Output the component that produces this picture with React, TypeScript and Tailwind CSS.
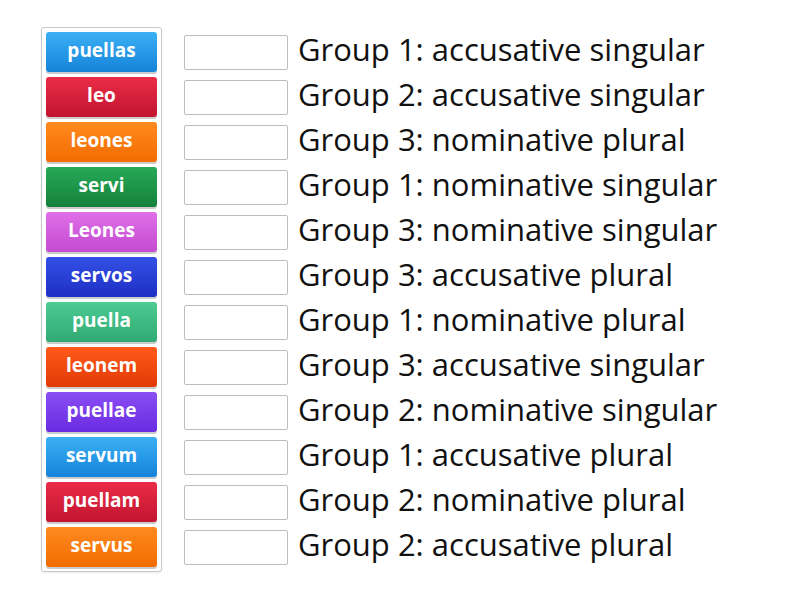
const rows = [
  { word: 'puellas', from: '#3bb0f5', to: '#1583d9', label: 'Group 1: accusative singular' },
  { word: 'leo', from: '#ea2c48', to: '#c2142f', label: 'Group 2: accusative singular' },
  { word: 'leones', from: '#ff8a1f', to: '#f26c00', label: 'Group 3: nominative plural' },
  { word: 'servi', from: '#27a957', to: '#15813b', label: 'Group 1: nominative singular' },
  { word: 'Leones', from: '#e06fe8', to: '#c34bd0', label: 'Group 3: nominative singular' },
  { word: 'servos', from: '#3450e6', to: '#1e2fc4', label: 'Group 3: accusative plural' },
  { word: 'puella', from: '#4ccb92', to: '#2faa72', label: 'Group 1: nominative plural' },
  { word: 'leonem', from: '#ff5a1a', to: '#e13a05', label: 'Group 3: accusative singular' },
  { word: 'puellae', from: '#8a4ef5', to: '#6a2be0', label: 'Group 2: nominative singular' },
  { word: 'servum', from: '#3bb0f5', to: '#1583d9', label: 'Group 1: accusative plural' },
  { word: 'puellam', from: '#ea2c48', to: '#c2142f', label: 'Group 2: nominative plural' },
  { word: 'servus', from: '#ff8a1f', to: '#f26c00', label: 'Group 2: accusative plural' },
]

export default function App() {
  return (
    <div className="w-[800px] h-[600px] bg-white pl-[41px] pt-[27px] flex items-start font-['Open_Sans',sans-serif]">
      <div className="w-[121px] border border-[#c8c8c8] rounded-[3px] p-[4px] flex flex-col gap-[5px] shadow-[0_1px_2px_rgba(0,0,0,0.08)]">
        {rows.map(r => (
          <div
            key={r.word}
            className="h-[40px] rounded-[3px] flex items-center justify-center text-white font-bold text-[19px] pb-[3px] shadow-[0_2px_0_rgba(0,0,0,0.2)]"
            style={{ background: `linear-gradient(to bottom, ${r.from}, ${r.to})` }}
          >
            {r.word}
          </div>
        ))}
      </div>
      <div className="pt-[5px] pl-[22px] flex flex-col gap-[5px]">
        {rows.map(r => (
          <div key={r.label + r.word} className="h-[40px] flex items-center">
            <div className="w-[104px] h-[35px] border border-[#bdbdbd] rounded-[2px] bg-white" />
            <span className="ml-[10px] mb-[6px] text-[31px] text-[#111] leading-none">{r.label}</span>
          </div>
        ))}
      </div>
    </div>
  )
}
